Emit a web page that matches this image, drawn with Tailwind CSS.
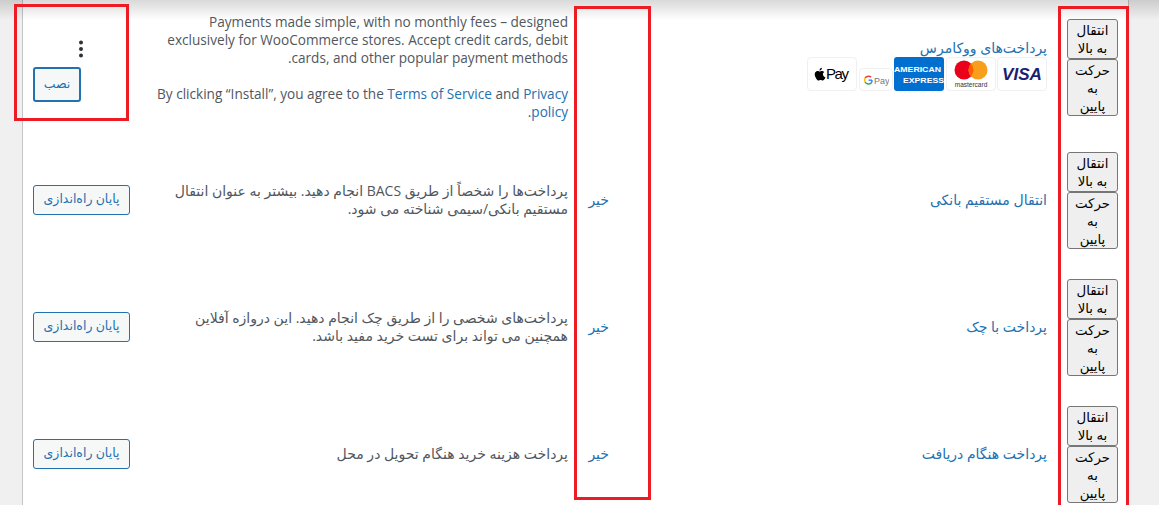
<!DOCTYPE html>
<html lang="fa">
<head>
    <meta charset="UTF-8">
    <title>Payments</title>
    <script src="https://cdn.jsdelivr.net/npm/@tailwindcss/browser@4"></script>
</head>
<body class="bg-[#f0f0f1] h-[505px] overflow-hidden relative font-['Open_Sans','DejaVu_Sans',sans-serif] text-[14px] text-[#50575e]">
    <!-- table panel -->
    <div dir="rtl" class="ml-[22px] w-[1107px] h-[505px] bg-white border-x border-[#c3c4c7] overflow-hidden">

        <!-- woo payments -->
        <div class="grid grid-cols-[81px_438px_41px_428px_117px] h-[138px] -mt-[1px]">
            <div class="flex flex-col justify-center pr-[10px] pb-[1px]">
                <button class="w-[51px] h-[40px] bg-[#efefef] border border-[#767676] rounded-[3px] text-[13.33px] leading-[18px] text-black">انتقال<br>به بالا</button>
                <button class="w-[51px] h-[57px] bg-[#efefef] border border-[#767676] rounded-[3px] text-[13.33px] leading-[18px] text-black">حرکت<br>به<br>پایین</button>
            </div>
            <div class="flex flex-col justify-center pb-[6px]">
                <a class="text-[#2271b1] leading-[18px]">پرداخت‌های ووکامرس</a>
                <div dir="ltr" class="flex flex-row-reverse items-end justify-start gap-[1.5px]">
                    <div class="w-[50px] h-[34px] border border-[#f0f0f1] rounded-[4px] bg-white flex items-center justify-center">
                        <svg width="44" height="18" viewBox="0 0 44 18"><text x="2" y="15" font-family="Liberation Sans" font-size="17" font-weight="700" font-style="italic" fill="#1a1f71" textLength="40" lengthAdjust="spacingAndGlyphs">VISA</text></svg>
                    </div>
                    <div class="w-[50px] h-[34px] border border-[#f0f0f1] rounded-[4px] bg-white flex items-center justify-center">
                        <svg width="36" height="30" viewBox="0 0 36 30"><circle cx="11" cy="11" r="9.500" fill="#eb001b"/><circle cx="25" cy="11" r="9.500" fill="#f79e1b"/><path d="M18 4.600a9.500 9.500 0 0 1 0 12.800a9.500 9.500 0 0 1 0-12.800z" fill="#ff5f00"/><text x="18" y="28" text-anchor="middle" font-family="Liberation Sans" font-size="6.500" fill="#333">mastercard</text></svg>
                    </div>
                    <div class="w-[50px] h-[34px] rounded-[3px] bg-[#016fd0] flex flex-col justify-center overflow-hidden">
                        <svg width="50" height="24" viewBox="0 0 50 24"><text x="0" y="10" font-family="Liberation Sans" font-size="8" font-weight="700" fill="#fff" textLength="47" lengthAdjust="spacingAndGlyphs">AMERICAN</text><text x="9" y="21" font-family="Liberation Sans" font-size="8" font-weight="700" fill="#fff" textLength="41" lengthAdjust="spacingAndGlyphs">EXPRESS</text></svg>
                    </div>
                    <div class="w-[34px] h-[23px] border border-[#f0f0f1] rounded-[4px] bg-white flex items-center justify-center">
                        <svg width="26" height="12" viewBox="0 0 26 12"><path d="M9 6.200H5.600" fill="none" stroke="#4285f4" stroke-width="1.500"/><path d="M8.200 3.300A4 4 0 0 0 2.100 4" fill="none" stroke="#ea4335" stroke-width="1.500"/><path d="M2.100 4a4 4 0 0 0 0 4" fill="none" stroke="#fbbc05" stroke-width="1.500"/><path d="M2.100 8a4 4 0 0 0 6 1.200" fill="none" stroke="#34a853" stroke-width="1.500"/><path d="M8.100 9.200A4 4 0 0 0 9 6.200" fill="none" stroke="#4285f4" stroke-width="1.500"/><text x="11" y="9.500" font-family="Liberation Sans" font-size="9" fill="#777">Pay</text></svg>
                    </div>
                    <div class="w-[50px] h-[34px] border border-[#f0f0f1] rounded-[4px] bg-white flex items-center justify-center">
                        <svg width="36" height="16" viewBox="0 0 36 16"><path d="M8.900 8.400c0-1.500 1.200-2.200 1.300-2.300-.7-1-1.800-1.200-2.200-1.200-.9-.1-1.800.6-2.300.6s-1.200-.6-2-.6c-1 0-2 .6-2.600 1.600-1.100 2 .3 4.900 1.400 6.500.5.8 1.200 1.700 2 1.600.8 0 1.100-.5 2.100-.5s1.200.5 2.100.5 1.400-.8 1.900-1.500c.6-.9.900-1.800.9-1.800s-2.500-.9-2.600-2.900zM7.300 3.700c.4-.5.700-1.200.6-1.900-.6 0-1.400.4-1.800.9-.4.500-.7 1.200-.6 1.800.7.1 1.400-.3 1.800-.8z" fill="#000"/><text x="12" y="13" font-family="Liberation Sans" font-size="15" fill="#000" textLength="23">Pay</text></svg>
                    </div>
                </div>
            </div>
            <div></div>
            <div class="leading-[18px] pt-[14px] pl-[15px] text-[13.6px]">
                <p class="mb-[18px]">Payments made simple, with no monthly fees – designed exclusively for WooCommerce stores. Accept credit cards, debit cards, and other popular payment methods.</p>
                <p>By clicking “Install”, you agree to the <a class="text-[#2271b1]">Terms of Service</a> and <a class="text-[#2271b1]">Privacy policy</a>.</p>
            </div>
            <div class="flex justify-end items-start pl-[10px] pt-[41px]">
                <div class="flex flex-col w-[48px]">
                    <svg class="w-[4px] h-[18px] -mr-[2px] mb-[9px]" viewBox="0 0 4 18"><circle cx="2" cy="2.500" r="2" fill="#2c3338"/><circle cx="2" cy="9" r="2" fill="#2c3338"/><circle cx="2" cy="15.500" r="2" fill="#2c3338"/></svg>
                    <button class="w-[48px] h-[35px] bg-[#f6f7f7] border-2 border-[#2271b1] rounded-[3px] text-[12.5px] text-[#2271b1]">نصب</button>
                </div>
            </div>
        </div>

        <!-- bacs -->
        <div class="grid grid-cols-[81px_438px_41px_428px_117px] h-[127px] items-center">
            <div class="flex flex-col pr-[10px]">
                <button class="w-[51px] h-[40px] bg-[#efefef] border border-[#767676] rounded-[3px] text-[13.33px] leading-[18px] text-black">انتقال<br>به بالا</button>
                <button class="w-[51px] h-[57px] bg-[#efefef] border border-[#767676] rounded-[3px] text-[13.33px] leading-[18px] text-black">حرکت<br>به<br>پایین</button>
            </div>
            <a class="text-[#2271b1] pb-[2px]">انتقال مستقیم بانکی</a>
            <a class="text-[#2271b1] pb-[2px]">خیر</a>
            <p class="leading-[18px] pl-[25px] pb-[2px]">پرداخت‌ها را شخصاً از طریق BACS انجام دهید. بیشتر به عنوان انتقال مستقیم بانکی/سیمی شناخته می شود.</p>
            <div class="flex justify-end pl-[10px] pb-[2px]">
                <button class="w-[97px] h-[30px] bg-[#f6f7f7] border border-[#2271b1] rounded-[3px] text-[12.5px] text-[#2271b1]">پایان راه‌اندازی</button>
            </div>
        </div>

        <!-- cheque -->
        <div class="grid grid-cols-[81px_438px_41px_428px_117px] h-[127px] items-center">
            <div class="flex flex-col pr-[10px]">
                <button class="w-[51px] h-[40px] bg-[#efefef] border border-[#767676] rounded-[3px] text-[13.33px] leading-[18px] text-black">انتقال<br>به بالا</button>
                <button class="w-[51px] h-[57px] bg-[#efefef] border border-[#767676] rounded-[3px] text-[13.33px] leading-[18px] text-black">حرکت<br>به<br>پایین</button>
            </div>
            <a class="text-[#2271b1] pb-[2px]">پرداخت با چک</a>
            <a class="text-[#2271b1] pb-[2px]">خیر</a>
            <p class="leading-[18px] pl-[25px] pb-[2px]">پرداخت‌های شخصی را از طریق چک انجام دهید. این دروازه آفلاین همچنین می تواند برای تست خرید مفید باشد.</p>
            <div class="flex justify-end pl-[10px] pb-[2px]">
                <button class="w-[97px] h-[30px] bg-[#f6f7f7] border border-[#2271b1] rounded-[3px] text-[12.5px] text-[#2271b1]">پایان راه‌اندازی</button>
            </div>
        </div>

        <!-- cod -->
        <div class="grid grid-cols-[81px_438px_41px_428px_117px] h-[127px] items-center">
            <div class="flex flex-col pr-[10px]">
                <button class="w-[51px] h-[40px] bg-[#efefef] border border-[#767676] rounded-[3px] text-[13.33px] leading-[18px] text-black">انتقال<br>به بالا</button>
                <button class="w-[51px] h-[57px] bg-[#efefef] border border-[#767676] rounded-[3px] text-[13.33px] leading-[18px] text-black">حرکت<br>به<br>پایین</button>
            </div>
            <a class="text-[#2271b1] pb-[2px]">پرداخت هنگام دریافت</a>
            <a class="text-[#2271b1] pb-[2px]">خیر</a>
            <p class="leading-[18px] pl-[25px] pb-[2px]">پرداخت هزینه خرید هنگام تحویل در محل</p>
            <div class="flex justify-end pl-[10px] pb-[2px]">
                <button class="w-[97px] h-[30px] bg-[#f6f7f7] border border-[#2271b1] rounded-[3px] text-[12.5px] text-[#2271b1]">پایان راه‌اندازی</button>
            </div>
        </div>
    </div>

    <!-- top shadow -->
    <div class="absolute top-0 left-0 right-0 h-[20px] bg-gradient-to-b from-black/15 to-transparent"></div>

    <!-- red annotation boxes -->
    <div class="absolute left-[14px] top-[4px] w-[115px] h-[117px] border-[3px] border-[#ed1c24]"></div>
    <div class="absolute left-[574px] top-[6px] w-[77px] h-[494px] border-[3px] border-[#ed1c24]"></div>
    <div class="absolute left-[1058px] top-[6px] w-[71px] h-[510px] border-[3px] border-[#ed1c24]"></div>
</body>
</html>
